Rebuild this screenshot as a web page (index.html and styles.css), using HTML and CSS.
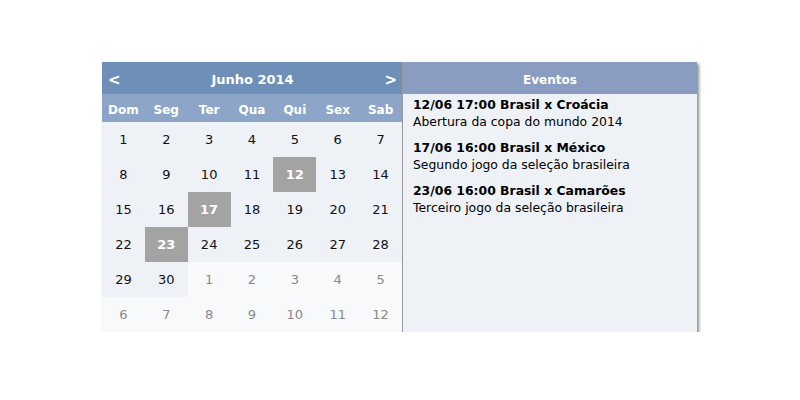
FILE: index.html
```html
<!DOCTYPE html>
<html lang="pt-BR">
<head>
    <meta charset="UTF-8">
    <title>Calendário de eventos</title>
    <link rel="stylesheet" href="styles.css">
</head>
<body>
    <div class="agenda">
        <div class="calendar">
            <div class="cal-header">
                <span class="nav">&lt;</span>
                <span class="month">Junho 2014</span>
                <span class="nav">&gt;</span>
            </div>
            <div class="weekdays">
                <span>Dom</span><span>Seg</span><span>Ter</span><span>Qua</span><span>Qui</span><span>Sex</span><span>Sab</span>
            </div>
            <div class="days">
                <span>1</span><span>2</span><span>3</span><span>4</span><span>5</span><span>6</span><span>7</span>
                <span>8</span><span>9</span><span>10</span><span>11</span><span class="event">12</span><span>13</span><span>14</span>
                <span>15</span><span>16</span><span class="event">17</span><span>18</span><span>19</span><span>20</span><span>21</span>
                <span>22</span><span class="event">23</span><span>24</span><span>25</span><span>26</span><span>27</span><span>28</span>
                <span>29</span><span>30</span><span class="other">1</span><span class="other">2</span><span class="other">3</span><span class="other">4</span><span class="other">5</span>
                <span class="other">6</span><span class="other">7</span><span class="other">8</span><span class="other">9</span><span class="other">10</span><span class="other">11</span><span class="other">12</span>
            </div>
        </div>
        <div class="events">
            <div class="events-header">Eventos</div>
            <div class="events-body">
                <div class="event-item">
                    <strong>12/06 17:00 Brasil x Croácia</strong>
                    <p>Abertura da copa do mundo 2014</p>
                </div>
                <div class="event-item">
                    <strong>17/06 16:00 Brasil x México</strong>
                    <p>Segundo jogo da seleção brasileira</p>
                </div>
                <div class="event-item">
                    <strong>23/06 16:00 Brasil x Camarões</strong>
                    <p>Terceiro jogo da seleção brasileira</p>
                </div>
            </div>
        </div>
    </div>
</body>
</html>
```

FILE: styles.css
```css
* {
    margin: 0;
    padding: 0;
    box-sizing: border-box;
}

body {
    background: #fff;
    font-family: "DejaVu Sans", Verdana, sans-serif;
}

.agenda {
    display: flex;
    width: 595px;
    margin: 62px 0 0 102px;
    background: #eef2f7;
    box-shadow: 2px 2px 3px rgba(0, 0, 0, 0.45);
}

.calendar {
    width: 300px;
}

.cal-header {
    height: 32px;
    padding: 3px 5px 0 6px;
    background: #6e8fb7;
    color: #fff;
    display: flex;
    align-items: center;
    justify-content: space-between;
    font-weight: bold;
    font-size: 13px;
}

.cal-header .nav {
    font-size: 15px;
}

.weekdays {
    height: 28px;
    padding-top: 4px;
    background: #8da6c7;
    display: grid;
    grid-template-columns: repeat(7, 1fr);
    align-items: center;
    text-align: center;
    color: #fff;
    font-weight: bold;
    font-size: 12px;
}

.days {
    display: grid;
    grid-template-columns: repeat(7, 1fr);
    grid-auto-rows: 35px;
    font-size: 13px;
}

.days span {
    display: flex;
    align-items: center;
    justify-content: center;
    color: #111;
}

.days .event {
    background: #a3a3a3;
    color: #fff;
    font-weight: bold;
}

.days .other {
    background: #f7f9fb;
    color: #8a8a8a;
}

.events {
    flex: 1;
    border-left: 1px solid #9a9a9a;
}

.events-header {
    height: 32px;
    padding-top: 4px;
    background: #8a9cc0;
    color: #fff;
    font-weight: bold;
    font-size: 12px;
    display: flex;
    align-items: center;
    justify-content: center;
}

.events-body {
    padding: 2px 10px;
    color: #000;
}

.event-item {
    margin-bottom: 9px;
    font-size: 12.4px;
    line-height: 17px;
}

.event-item strong {
    display: block;
}
```
